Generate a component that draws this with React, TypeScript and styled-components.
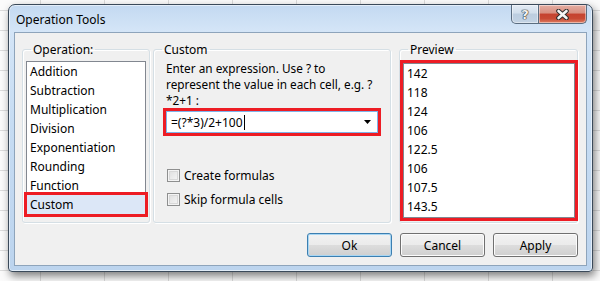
import React from 'react'
import styled, { createGlobalStyle } from 'styled-components'

const GlobalStyle = createGlobalStyle`
  html, body {
    margin: 0;
    padding: 0;
  }
  body {
    width: 600px;
    height: 281px;
    overflow: hidden;
    font-family: "Noto Sans", "Open Sans", sans-serif;
    font-size: 12px;
    color: #000;
    background-color: #fbfbfb;
    background-image:
      linear-gradient(to right, #dcdcdc 1px, transparent 1px),
      linear-gradient(to bottom, #dcdcdc 1px, transparent 1px);
    background-size: 64px 20px;
    background-position: 40px 10px;
  }
`

const Page = styled.div`
  padding: 4px 0 0 8px;
`

const Window = styled.div`
  width: 585px;
  height: 268px;
  box-sizing: border-box;
  display: flex;
  flex-direction: column;
  border: 1px solid #3b4a5a;
  border-radius: 7px 7px 4px 4px;
  padding: 0 5px 5px 5px;
  background: linear-gradient(to bottom, #c3d9f1 0, #d4e5f7 26px, #c6dcf3 120px, #bcd4ee 100%);
  box-shadow: inset 0 0 0 1px rgba(255, 255, 255, 0.55), 2px 4px 9px rgba(0, 0, 0, 0.5);
`

const TitleBar = styled.div`
  height: 27px;
  display: flex;
  justify-content: space-between;
  align-items: flex-start;
`

const Title = styled.span`
  margin: 7px 0 0 2px;
  font-size: 12px;
  line-height: 15px;
`

const CaptionButtons = styled.div`
  display: flex;
`

const CaptionButton = styled.div<{ $close?: boolean }>`
  width: ${p => (p.$close ? 48 : 28)}px;
  height: 19px;
  box-sizing: border-box;
  display: flex;
  align-items: center;
  justify-content: center;
  border: 1px solid #5b6d80;
  border-top: none;
  border-left-width: ${p => (p.$close ? 0 : 1)}px;
  border-radius: ${p => (p.$close ? '0 0 5px 0' : '0 0 0 5px')};
  background: ${p =>
    p.$close
      ? 'linear-gradient(to bottom, #e4ada2 0%, #d88f80 45%, #c5422f 50%, #c84a34 75%, #de7d62 100%)'
      : 'linear-gradient(to bottom, #e3ebf4 0%, #d2dfec 45%, #bccddf 50%, #c3d3e4 100%)'};
  box-shadow: inset 0 0 0 1px rgba(255, 255, 255, 0.45);
  color: #f4f4f4;
  font-family: "DejaVu Sans", sans-serif;
  font-weight: bold;
  font-size: 13px;
  line-height: 1;
  text-shadow: 0 0 1px #222, 0 0 1px #222, 0 0 1px #222;
`

const Client = styled.div`
  flex: 1;
  display: flex;
  flex-direction: column;
  background: #f0f0f0;
  border: 1px solid #8ea4bb;
  padding: 9px 7px 7px 7px;
`

const Groups = styled.div`
  display: flex;
  align-items: flex-start;
`

const Group = styled.fieldset<{ $width: number; $gap?: number }>`
  width: ${p => p.$width}px;
  height: 181px;
  box-sizing: border-box;
  min-width: 0;
  margin: 0 0 0 ${p => p.$gap ?? 0}px;
  padding: 0 2px 0 3px;
  border: 1px solid #d5dfe5;
  border-radius: 3px;
  box-shadow: inset 1px 1px 0 #fff, 1px 1px 0 #fff;
`

const Legend = styled.legend`
  margin-left: 5px;
  padding: 0 2px;
  font-size: 12px;
  line-height: 15px;
`

const ListBox = styled.div<{ $top: number; $width: number; $height: number; $marked?: boolean }>`
  margin-top: ${p => p.$top}px;
  width: ${p => p.$width}px;
  height: ${p => p.$height}px;
  box-sizing: border-box;
  background: #fff;
  border: 1px solid #828790;
  outline: ${p => (p.$marked ? '3px solid #ed1c24' : 'none')};
`

const ListItem = styled.div<{ $selected?: boolean }>`
  height: 19px;
  line-height: 19px;
  padding-left: 3px;
  white-space: nowrap;
  background: ${p => (p.$selected ? '#dce7f7' : 'transparent')};
  outline: ${p => (p.$selected ? '3px solid #ed1c24' : 'none')};
`

const CustomBody = styled.div`
  padding: 3px 0 0 9px;
`

const HintLine = styled.div`
  font-size: 11.8px;
  line-height: 16px;
  white-space: nowrap;
`

const Combo = styled.div`
  margin-top: 3px;
  width: 212px;
  height: 22px;
  box-sizing: border-box;
  display: flex;
  align-items: center;
  justify-content: space-between;
  padding: 0 6px 0 4px;
  background: #fff;
  border: 1px solid #7eb4ea;
  outline: 3px solid #ed1c24;
`

const ComboText = styled.span`
  display: flex;
  align-items: center;
`

const Caret = styled.span`
  width: 1px;
  height: 15px;
  margin-left: 1px;
  background: #000;
`

const Checks = styled.div`
  margin-top: 35px;
  display: flex;
  flex-direction: column;
  gap: 9px;
`

const CheckRow = styled.label`
  display: flex;
  align-items: center;
  gap: 4px;
  padding-left: 1px;
  line-height: 15px;
`

const CheckBox = styled.span`
  width: 13px;
  height: 13px;
  box-sizing: border-box;
  border: 1px solid #8e8f8f;
  background: linear-gradient(135deg, #dcdcdc, #f8f8f8);
  box-shadow: inset 0 0 0 1px #f4f4f4, inset 0 0 0 2px #d8d8d8;
`

const ButtonRow = styled.div`
  margin-top: 10px;
  margin-right: 1px;
  display: flex;
  justify-content: flex-end;
  gap: 8px;
`

const Button = styled.div<{ $default?: boolean }>`
  width: 85px;
  height: 24px;
  box-sizing: border-box;
  display: flex;
  align-items: center;
  justify-content: center;
  border: 1px solid ${p => (p.$default ? '#3c7fb1' : '#707070')};
  border-radius: 3px;
  background: linear-gradient(to bottom, #f2f2f2 0%, #ebebeb 50%, #dddddd 50%, #cfcfcf 100%);
  box-shadow: inset 0 0 0 1px ${p => (p.$default ? '#a8d6f3' : '#fcfcfc')};
`

const operations = ['Addition', 'Subtraction', 'Multiplication', 'Division', 'Exponentiation', 'Rounding', 'Function', 'Custom']
const preview = ['142', '118', '124', '106', '122.5', '106', '107.5', '143.5']

const CloseGlyph = () => (
  <svg width="13" height="11" viewBox="0 0 13 11">
    <path d="M2.5 2 L10.5 9 M10.5 2 L2.5 9" stroke="#2e2e2e" strokeWidth="4.6" strokeLinecap="round" />
    <path d="M2.5 2 L10.5 9 M10.5 2 L2.5 9" stroke="#f6f6f6" strokeWidth="2.6" strokeLinecap="round" />
  </svg>
)

export default function App() {
  return (
    <Page>
      <GlobalStyle />
      <Window>
        <TitleBar>
          <Title>Operation Tools</Title>
          <CaptionButtons>
            <CaptionButton>?</CaptionButton>
            <CaptionButton $close><CloseGlyph /></CaptionButton>
          </CaptionButtons>
        </TitleBar>
        <Client>
          <Groups>
            <Group $width={128}>
              <Legend>Operation:</Legend>
              <ListBox $top={4} $width={120} $height={156}>
                {operations.map(op => (
                  <ListItem key={op} $selected={op === 'Custom'}>{op}</ListItem>
                ))}
              </ListBox>
            </Group>
            <Group $width={238} $gap={3}>
              <Legend>Custom</Legend>
              <CustomBody>
                <HintLine>Enter an expression. Use ? to</HintLine>
                <HintLine>represent the value in each cell, e.g. ?</HintLine>
                <HintLine>*2+1 :</HintLine>
                <Combo>
                  <ComboText>=(?*3)/2+100<Caret /></ComboText>
                  <svg width="7" height="4" viewBox="0 0 7 4">
                    <polygon points="0,0 7,0 3.5,4" fill="#000" />
                  </svg>
                </Combo>
                <Checks>
                  <CheckRow><CheckBox />Create formulas</CheckRow>
                  <CheckRow><CheckBox />Skip formula cells</CheckRow>
                </Checks>
              </CustomBody>
            </Group>
            <Group $width={179} $gap={8}>
              <Legend>Preview</Legend>
              <ListBox $top={6} $width={172} $height={155} $marked>
                {preview.map((v, i) => (
                  <ListItem key={i}>{v}</ListItem>
                ))}
              </ListBox>
            </Group>
          </Groups>
          <ButtonRow>
            <Button $default>Ok</Button>
            <Button>Cancel</Button>
            <Button>Apply</Button>
          </ButtonRow>
        </Client>
      </Window>
    </Page>
  )
}
